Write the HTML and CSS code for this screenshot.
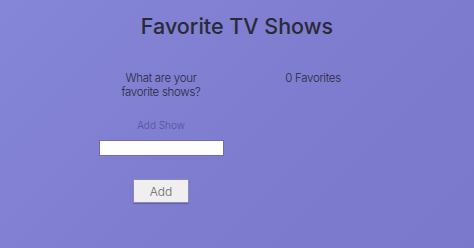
FILE: index.html
```html
<!DOCTYPE html>
<html>
<head>
<meta charset="utf-8">
<link rel="stylesheet" href="styles.css">
</head>
<body>
<div class="page">
  <h1 class="title">Favorite TV Shows</h1>
  <div class="columns">
    <div class="col left">
      <p class="question">What are your<br>favorite shows?</p>
      <label class="label" for="show">Add Show</label>
      <input class="field" id="show" type="text">
      <button class="btn">Add</button>
    </div>
    <div class="col right">
      <p class="count">0 Favorites</p>
    </div>
  </div>
</div>
</body>
</html>
```
FILE: styles.css
```css
html, body {
  margin: 0;
  padding: 0;
  height: 100%;
}
body {
  background: linear-gradient(135deg, #8686d8 0%, #7e7dd0 50%, #7a78cb 100%);
  font-family: "Inter", "Open Sans", sans-serif;
  color: #333;
}
.page {
  display: flex;
  flex-direction: column;
  align-items: center;
  padding-top: 12px;
}
.title {
  margin: 0;
  font-family: "Inter", sans-serif;
  font-weight: 500;
  font-size: 21.5px;
  line-height: 28px;
  color: #2a2a36;
}
.columns {
  display: flex;
  width: 100%;
  padding-left: 86px;
  box-sizing: border-box;
  margin-top: 32px;
}
.col {
  display: flex;
  flex-direction: column;
  align-items: center;
}
.left { width: 150px; }
.right { width: 154px; }
.question, .count {
  margin: 0;
  font-size: 11.5px;
  line-height: 13.5px;
  text-align: center;
  color: #2a2a38;
  font-weight: 350;
  letter-spacing: -0.3px;
}
.label {
  margin-top: 20px;
  font-size: 10px;
  line-height: 12px;
  color: #52519a;
  font-weight: 300;
}
.field {
  margin-top: 9px;
  width: 125px;
  height: 16px;
  box-sizing: border-box;
  border: 1px solid #6c6bb8;
  background: #fff;
  padding: 0;
}
.btn {
  margin-top: 23px;
  width: 56px;
  height: 24px;
  border: 1px solid #8a89c0;
  background: #f0eeee;
  color: #66666c;
  font-family: "Inter", sans-serif;
  font-size: 12px;
  font-weight: 300;
  padding: 0;
  box-shadow: 0 1px 1px rgba(60,60,120,0.4);
}
```
